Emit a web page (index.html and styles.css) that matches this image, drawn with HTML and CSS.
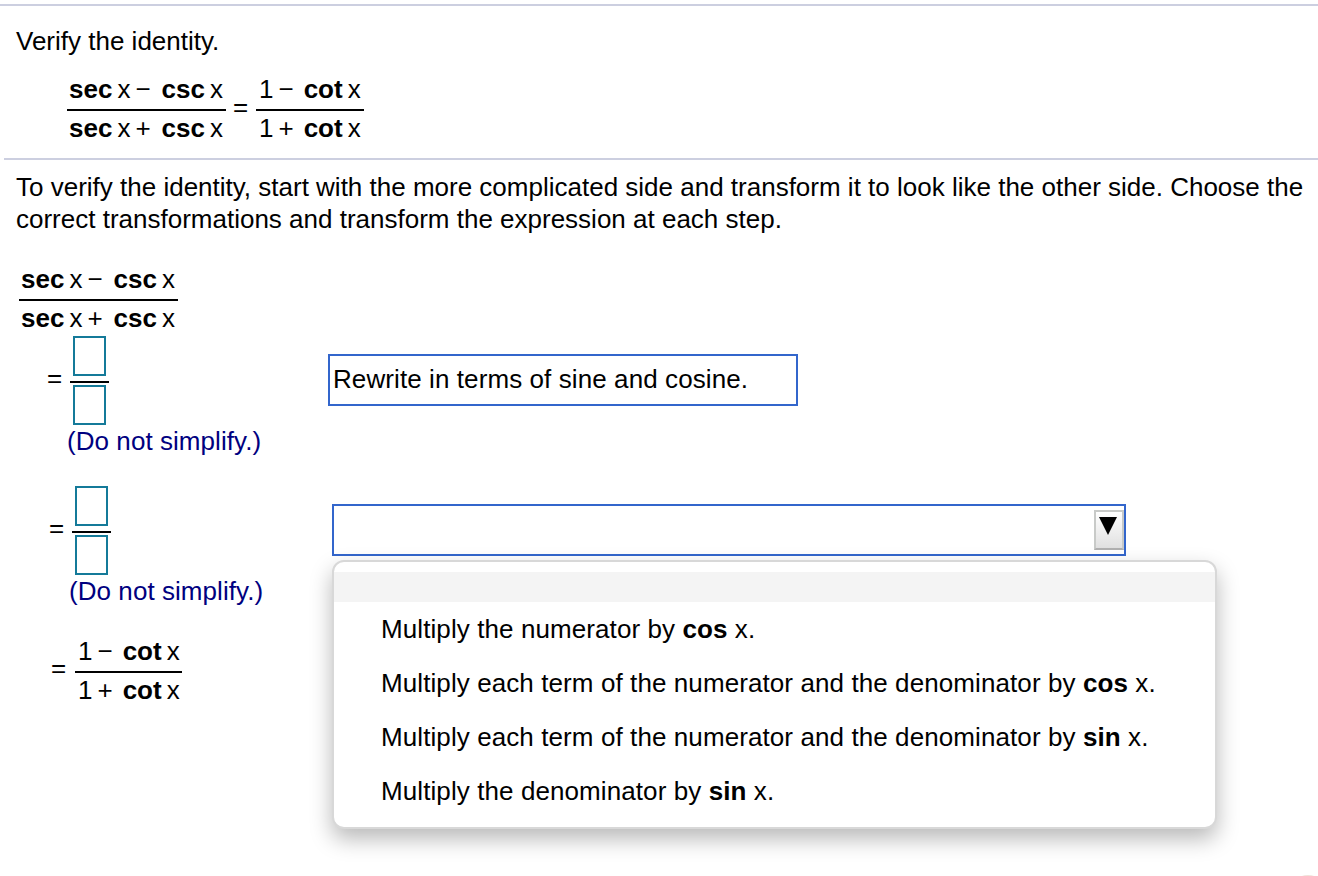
FILE: index.html
```html
<!DOCTYPE html>
<html lang="en">
<head>
    <meta charset="UTF-8">
    <meta name="viewport" content="width=device-width, initial-scale=1.0">
    <title>Verify the identity</title>
    <link rel="stylesheet" href="styles.css">
</head>
<body>
    <div class="question">
        <p>Verify the identity.</p>
        <div class="equation">
            <div class="fraction">
                <div class="num"><b>sec</b><i>x</i><span class="op">−</span><b>csc</b><i>x</i></div>
                <div class="den"><b>sec</b><i>x</i><span class="op">+</span><b>csc</b><i>x</i></div>
            </div>
            <span class="equals">=</span>
            <div class="fraction short">
                <div class="num"><span>1</span><span class="op">−</span><b>cot</b><i>x</i></div>
                <div class="den"><span>1</span><span class="op">+</span><b>cot</b><i>x</i></div>
            </div>
        </div>
    </div>

    <div class="work">
        <p>To verify the identity, start with the more complicated side and transform it to look like the other side. Choose the<br>correct transformations and transform the expression at each step.</p>

        <div class="fraction start">
            <div class="num"><b>sec</b><i>x</i><span class="op">−</span><b>csc</b><i>x</i></div>
            <div class="den"><b>sec</b><i>x</i><span class="op">+</span><b>csc</b><i>x</i></div>
        </div>

        <div class="step">
            <div class="left">
                <div class="answer">
                    <span class="equals">=</span>
                    <div class="blanks">
                        <div class="blank"></div>
                        <div class="bar"></div>
                        <div class="blank"></div>
                    </div>
                </div>
                <div class="note">(Do not simplify.)</div>
            </div>
            <div class="choice chosen">Rewrite in terms of sine and cosine.</div>
        </div>

        <div class="step second">
            <div class="left">
                <div class="answer">
                    <span class="equals">=</span>
                    <div class="blanks">
                        <div class="blank"></div>
                        <div class="bar"></div>
                        <div class="blank"></div>
                    </div>
                </div>
                <div class="note">(Do not simplify.)</div>
            </div>
            <div class="choice open">
                <button class="arrow" aria-label="Open list">
                    <svg width="20" height="20" viewBox="0 0 20 20"><path d="M1 1h18L10 19z"/></svg>
                </button>
                <ul class="menu">
                    <li class="empty"></li>
                    <li>Multiply the numerator by <b>cos</b> x.</li>
                    <li>Multiply each term of the numerator and the denominator by <b>cos</b> x.</li>
                    <li>Multiply each term of the numerator and the denominator by <b>sin</b> x.</li>
                    <li>Multiply the denominator by <b>sin</b> x.</li>
                </ul>
            </div>
        </div>

        <div class="equation result">
            <span class="equals">=</span>
            <div class="fraction short">
                <div class="num"><span>1</span><span class="op">−</span><b>cot</b><i>x</i></div>
                <div class="den"><span>1</span><span class="op">+</span><b>cot</b><i>x</i></div>
            </div>
        </div>
    </div>
    <div class="badge"></div>
</body>
</html>
```

FILE: styles.css
```css
* {
    box-sizing: border-box;
}

body {
    font-family: "Liberation Sans", Arial, sans-serif;
    font-size: 26px;
    line-height: 32px;
    color: #000;
    background-color: #fff;
    margin: 0;
    padding-top: 4px;
    height: 876px;
}

p {
    margin: 0;
    white-space: nowrap;
}

i {
    font-style: normal;
}

.question {
    height: 154px;
    border-top: 2px solid #cccfe0;
    padding: 19px 0 0 16px;
}

.work {
    margin-left: 4px;
    border-top: 2px solid #cccfe0;
    padding: 11px 0 0 12px;
}

/* fractions */
.equation {
    display: flex;
    margin: 17px 0 0 51px;
}

.fraction {
    width: 159px;
    line-height: 30px;
}

.num,
.den {
    display: flex;
    padding-left: 2px;
}

.num {
    height: 37px;
    border-bottom: 2px solid #000;
}

.den {
    padding-top: 2px;
}

.num i,
.den i {
    margin-left: 5px;
}

.op {
    margin: 0 11px 0 5px;
}

.short {
    width: 108px;
}

.short .num,
.short .den {
    padding-left: 3px;
}

.short .op {
    margin-right: 10px;
}

.equals {
    width: 30px;
    padding-left: 7px;
    margin-top: 18px;
    line-height: 30px;
}

/* steps */
.start {
    margin: 29px 0 0 3px;
}

.step {
    display: flex;
    height: 150px;
    margin-top: 3px;
}

.second {
    margin: 0 0 0 2px;
}

.left {
    width: 312px;
}

.answer {
    display: flex;
    margin-left: 31px;
}

.answer .equals {
    width: 23px;
    padding-left: 0;
    margin-top: 27px;
}

.blanks {
    width: 39px;
}

.blank {
    width: 33px;
    height: 40px;
    margin-left: 3px;
    border: 2px solid #147a99;
}

.bar {
    height: 2px;
    margin: 5px 0 2px;
    background-color: #000;
}

.note {
    margin-left: 51px;
    letter-spacing: 0.06px;
    color: #000080;
}

.choice {
    height: 52px;
    margin-top: 18px;
    border: 2px solid #3366cc;
    letter-spacing: 0.09px;
}

.chosen {
    width: 470px;
    padding-left: 3px;
    line-height: 47px;
}

.open {
    position: relative;
    width: 794px;
    margin-left: 2px;
    display: flex;
    justify-content: flex-end;
}

.arrow {
    width: 30px;
    height: 40px;
    margin-top: 4px;
    padding: 4px 0 0 2px;
    border: 2px solid #c8cac8;
    border-bottom-color: #b0b0b0;
    background: linear-gradient(#fff, #e0e0e0);
    display: flex;
}

.menu {
    position: absolute;
    top: 54px;
    left: -2px;
    width: 885px;
    height: 269px;
    margin: 0;
    padding: 10px 0 0;
    list-style: none;
    background-color: #fff;
    border: 2px solid #d8d8d8;
    border-radius: 12px;
    box-shadow: 0 10px 22px rgba(0, 0, 0, 0.28);
}

.menu li {
    padding-left: 47px;
    line-height: 54px;
    white-space: nowrap;
}

.menu .empty {
    height: 30px;
    background-color: #f4f4f4;
}

.result {
    margin: 0 0 0 35px;
}

.result .equals {
    width: 24px;
    padding-left: 0;
    margin-top: 17px;
}

.result .fraction {
    width: 107px;
}

/* only the top edge shows at the bottom of the window */
.badge {
    position: fixed;
    right: -8px;
    bottom: -35px;
    width: 36px;
    height: 36px;
    border-radius: 50%;
    background-color: #f0e4da;
}
```
